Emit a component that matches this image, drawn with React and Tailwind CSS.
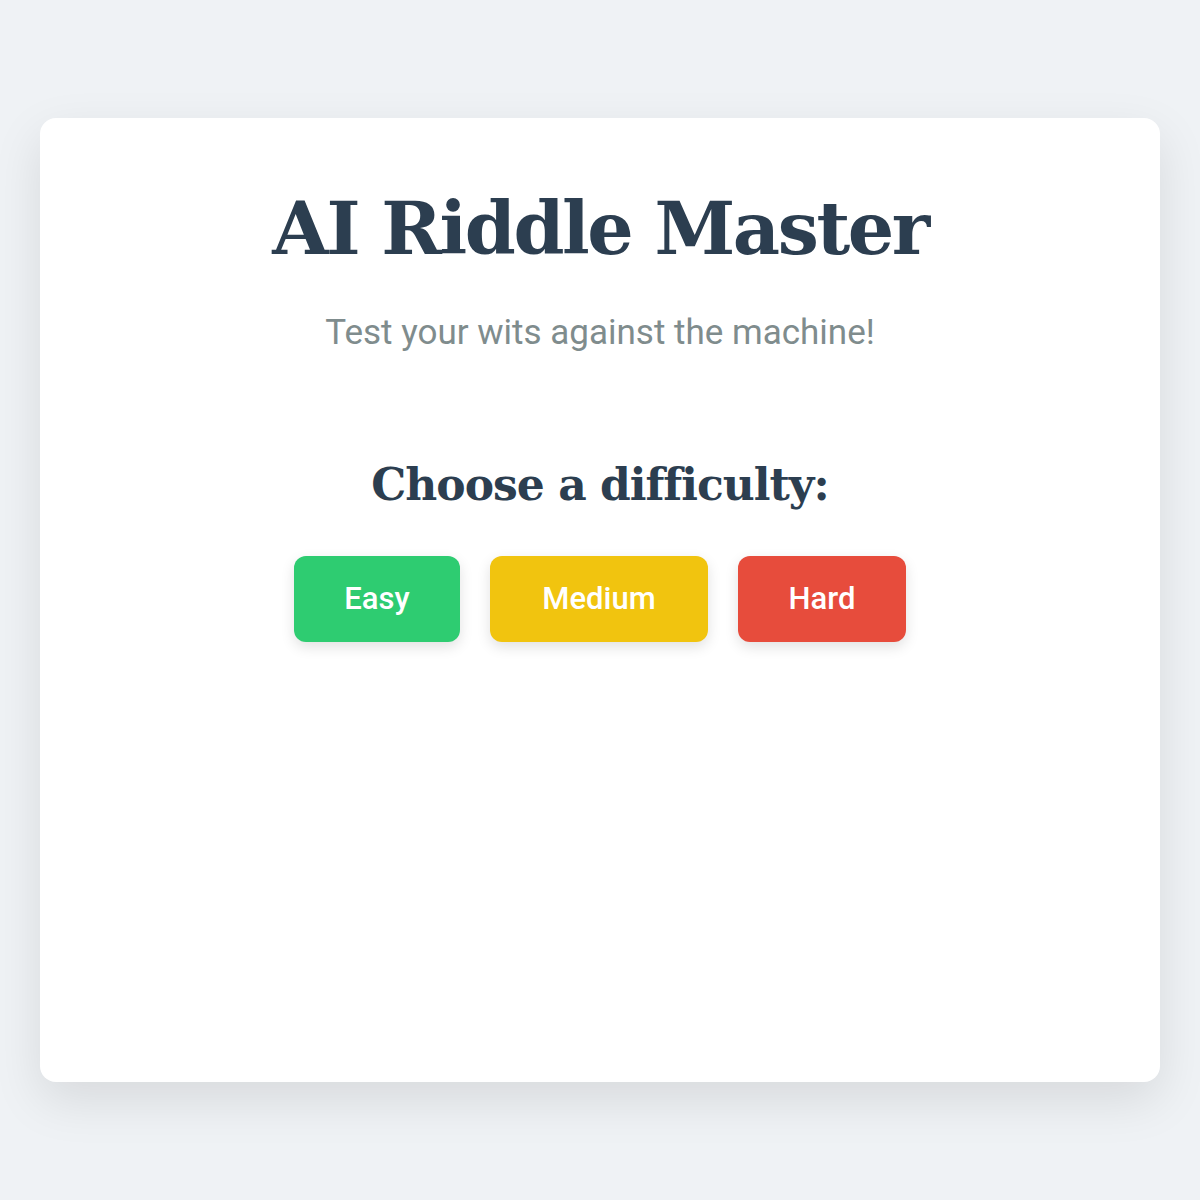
export default function App() {
  const levels = [
    { label: 'Easy', cls: 'bg-[#2ecc71] w-[166px]' },
    { label: 'Medium', cls: 'bg-[#f1c40f] w-[218px]' },
    { label: 'Hard', cls: 'bg-[#e74c3c] w-[168px]' },
  ]

  return (
    <div className="min-h-[1200px] w-full bg-[#eff2f5] px-10 pt-[118px]">
      <div className="h-[964px] rounded-2xl bg-white shadow-[0_18px_50px_rgba(0,0,0,0.1)] flex flex-col items-center pt-[50px]">
        <h1 className="font-['DejaVu_Serif',serif] font-bold text-[73px] leading-[120px] tracking-[-2.4px] text-[#2c3e50]">
          AI Riddle Master
        </h1>
        <p className="mt-[25px] font-['Roboto',sans-serif] text-[35px] leading-[40px] text-[#7f8c8d]">
          Test your wits against the machine!
        </p>
        <h2 className="mt-[102px] font-['DejaVu_Serif',serif] font-bold text-[44px] leading-[60px] tracking-[-1px] text-[#2c3e50]">
          Choose a difficulty:
        </h2>
        <div className="mt-[41px] flex gap-[30px]">
          {levels.map((l) => (
            <button
              key={l.label}
              className={`${l.cls} h-[86px] rounded-xl text-white font-['Roboto',sans-serif] font-medium text-[31px] shadow-[0_5px_14px_rgba(0,0,0,0.12)]`}
            >
              {l.label}
            </button>
          ))}
        </div>
      </div>
    </div>
  )
}
